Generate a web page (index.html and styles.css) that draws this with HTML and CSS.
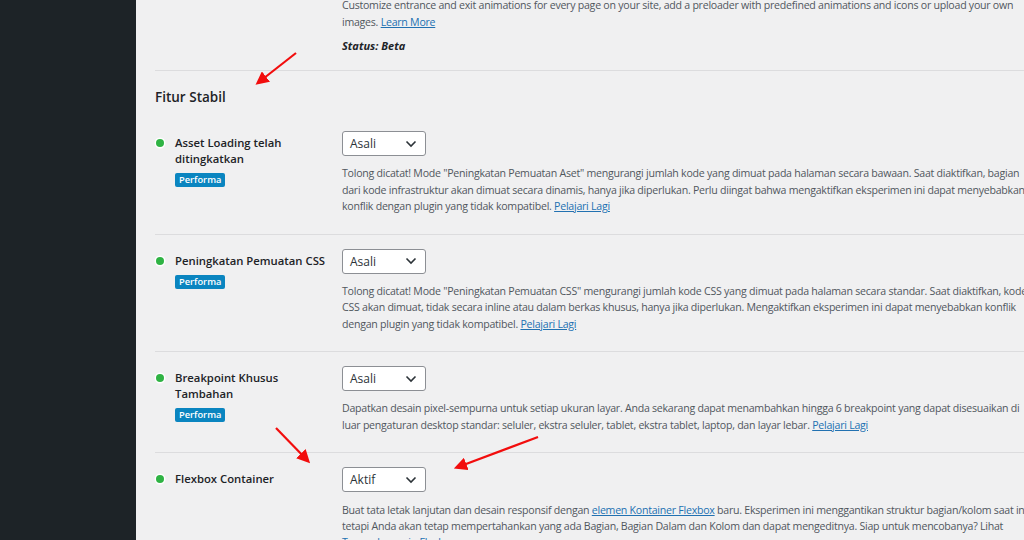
FILE: index.html
```html
<!DOCTYPE html>
<html lang="id">
<head>
  <meta charset="UTF-8" />
  <meta name="viewport" content="width=device-width, initial-scale=1.0" />
  <title>Fitur Stabil</title>
  <link rel="stylesheet" href="styles.css">
</head>
<body>
  <div class="layout">
    <div class="sidebar"></div>

    <div class="main">
      <div class="intro">
        <p class="desc">Customize entrance and exit animations for every page on your site, add a preloader with predefined animations and icons or upload your own<br>images. <a href="#">Learn More</a></p>
        <p class="status">Status: Beta</p>
      </div>

      <h2 class="section-title">Fitur Stabil</h2>

      <div class="feature first">
        <div class="feature-head">
          <span class="dot"></span>
          <div>
            <div class="feature-name">Asset Loading telah<br>ditingkatkan</div>
            <span class="tag">Performa</span>
          </div>
        </div>
        <div class="feature-body">
          <div class="select"><span>Asali</span><svg width="12" height="8" viewBox="0 0 12 8"><path d="M1.5 1.5 L6 6 L10.5 1.5" fill="none" stroke="#2c3338" stroke-width="1.6"/></svg></div>
          <p class="desc">Tolong dicatat! Mode "Peningkatan Pemuatan Aset" mengurangi jumlah kode yang dimuat pada halaman secara bawaan. Saat diaktifkan, bagian<br>dari kode infrastruktur akan dimuat secara dinamis, hanya jika diperlukan. Perlu diingat bahwa mengaktifkan eksperimen ini dapat menyebabkan<br>konflik dengan plugin yang tidak kompatibel. <a href="#">Pelajari Lagi</a></p>
        </div>
      </div>

      <div class="feature">
        <div class="feature-head">
          <span class="dot"></span>
          <div>
            <div class="feature-name">Peningkatan Pemuatan CSS</div>
            <span class="tag">Performa</span>
          </div>
        </div>
        <div class="feature-body">
          <div class="select"><span>Asali</span><svg width="12" height="8" viewBox="0 0 12 8"><path d="M1.5 1.5 L6 6 L10.5 1.5" fill="none" stroke="#2c3338" stroke-width="1.6"/></svg></div>
          <p class="desc">Tolong dicatat! Mode "Peningkatan Pemuatan CSS" mengurangi jumlah kode CSS yang dimuat pada halaman secara standar. Saat diaktifkan, kode<br>CSS akan dimuat, tidak secara inline atau dalam berkas khusus, hanya jika diperlukan. Mengaktifkan eksperimen ini dapat menyebabkan konflik<br>dengan plugin yang tidak kompatibel. <a href="#">Pelajari Lagi</a></p>
        </div>
      </div>

      <div class="feature">
        <div class="feature-head">
          <span class="dot"></span>
          <div>
            <div class="feature-name">Breakpoint Khusus<br>Tambahan</div>
            <span class="tag">Performa</span>
          </div>
        </div>
        <div class="feature-body">
          <div class="select"><span>Asali</span><svg width="12" height="8" viewBox="0 0 12 8"><path d="M1.5 1.5 L6 6 L10.5 1.5" fill="none" stroke="#2c3338" stroke-width="1.6"/></svg></div>
          <p class="desc">Dapatkan desain pixel-sempurna untuk setiap ukuran layar. Anda sekarang dapat menambahkan hingga 6 breakpoint yang dapat disesuaikan di<br>luar pengaturan desktop standar: seluler, ekstra seluler, tablet, ekstra tablet, laptop, dan layar lebar. <a href="#">Pelajari Lagi</a></p>
        </div>
      </div>

      <div class="feature">
        <div class="feature-head">
          <span class="dot"></span>
          <div>
            <div class="feature-name">Flexbox Container</div>
          </div>
        </div>
        <div class="feature-body">
          <div class="select"><span>Aktif</span><svg width="12" height="8" viewBox="0 0 12 8"><path d="M1.5 1.5 L6 6 L10.5 1.5" fill="none" stroke="#2c3338" stroke-width="1.6"/></svg></div>
          <p class="desc last">Buat tata letak lanjutan dan desain responsif dengan <a href="#">elemen Kontainer Flexbox</a> baru. Eksperimen ini menggantikan struktur bagian/kolom saat ini,<br>tetapi Anda akan tetap mempertahankan yang ada Bagian, Bagian Dalam dan Kolom dan dapat mengeditnya. Siap untuk mencobanya? Lihat<br><a href="#">Taman bermain Flexbox</a>.</p>
        </div>
      </div>
    </div>
  </div>

  <!-- red annotation arrows drawn over the screenshot -->
  <svg class="arrows" width="1024" height="540" viewBox="0 0 1024 540">
    <defs>
      <marker id="head" markerWidth="6" markerHeight="6" refX="4" refY="3" orient="auto" markerUnits="strokeWidth">
        <path d="M0 0 L6 3 L0 6 Z" fill="#f20d0d"/>
      </marker>
    </defs>
    <line x1="296" y1="53" x2="259" y2="82" stroke="#f20d0d" stroke-width="2.2" marker-end="url(#head)"/>
    <line x1="276" y1="428" x2="307" y2="460" stroke="#f20d0d" stroke-width="2.2" marker-end="url(#head)"/>
    <line x1="538" y1="437" x2="458" y2="467" stroke="#f20d0d" stroke-width="2.2" marker-end="url(#head)"/>
  </svg>
</body>
</html>
```

FILE: styles.css
```css
body {
  margin: 0;
  height: 540px;
  overflow: hidden;
  background: #f0f0f1;
  color: #50575e;
  font-family: "Open Sans", "Noto Sans", sans-serif;
  position: relative;
}
.layout {
  display: flex;
  height: 100%;
}
.sidebar {
  width: 136px;
  flex-shrink: 0;
  background: #1d2327;
}
.main {
  flex: 1;
  min-width: 0;
  padding-left: 19px;
  overflow: hidden;
}
a {
  color: #2271b1;
  text-decoration: underline;
}
.desc {
  margin: 0;
  font-size: 10.6px;
  line-height: 16.5px;
  letter-spacing: -0.25px;
  white-space: nowrap;
}
.intro {
  margin-top: -3px;
  padding-left: 187px;
  padding-bottom: 17px;
  border-bottom: 1px solid #dcdcde;
}
.status {
  margin: 8px 0 0;
  font-size: 11px;
  font-weight: 700;
  font-style: italic;
  color: #1d2327;
}
.section-title {
  margin: 16px 0 10px;
  font-size: 13.5px;
  line-height: 20px;
  font-weight: 600;
  color: #1d2327;
}
.feature {
  display: grid;
  grid-template-columns: 187px 1fr;
  padding: 14px 0 19px;
  border-top: 1px solid #dcdcde;
}
.feature.first {
  border-top: 0;
}
.feature-head {
  display: flex;
  gap: 11px;
  padding-top: 4px;
}
.dot {
  width: 8px;
  height: 8px;
  margin: 4px 0 0 1px;
  border-radius: 50%;
  background: #2fb344;
  box-shadow: 0 0 0 1.5px #fff;
  flex-shrink: 0;
}
.feature-name {
  font-size: 11.3px;
  line-height: 15.5px;
  font-weight: 600;
  color: #1d2327;
}
.tag {
  display: inline-block;
  margin-top: 4px;
  padding: 0 4px;
  height: 14px;
  line-height: 14px;
  font-size: 9.3px;
  font-weight: 600;
  color: #fff;
  background: #0a85c0;
  border-radius: 2px;
}
.select {
  width: 84px;
  height: 25px;
  box-sizing: border-box;
  display: flex;
  align-items: center;
  justify-content: space-between;
  padding: 0 8px 0 7px;
  background: #fff;
  border: 1px solid #8c8f94;
  border-radius: 3px;
  font-size: 12px;
  color: #2c3338;
}
.feature-body .desc {
  margin-top: 9px;
}
.feature-body .desc.last {
  margin-top: 10px;
  line-height: 16px;
}
.arrows {
  position: absolute;
  left: 0;
  top: 0;
  pointer-events: none;
}
```
